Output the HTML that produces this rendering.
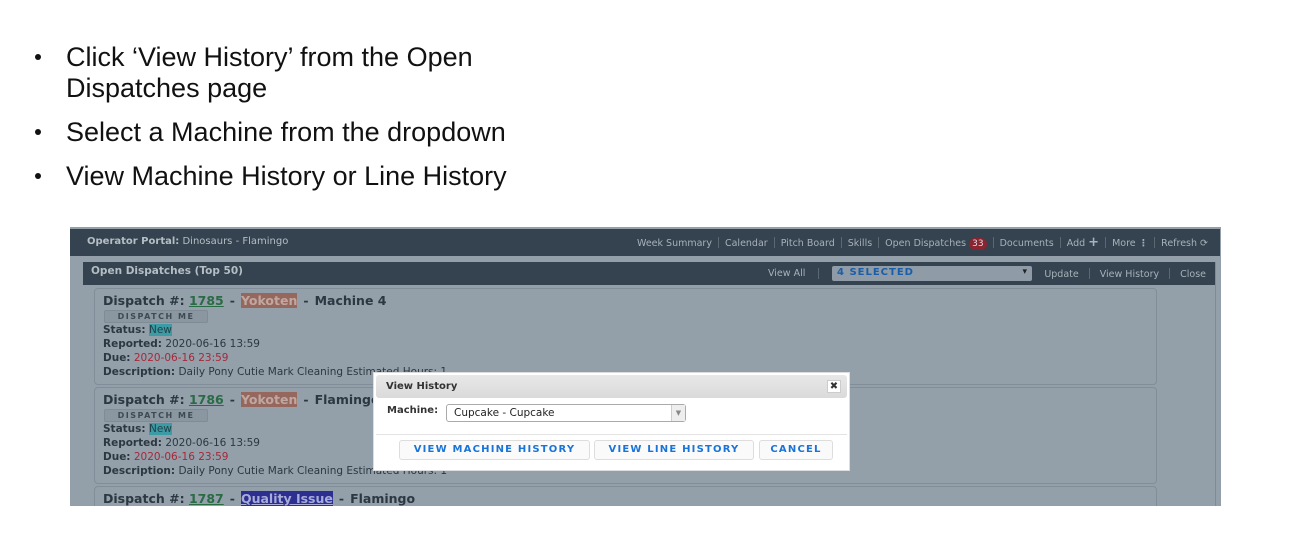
<!DOCTYPE html>
<html><head><meta charset="utf-8"><style>
*{margin:0;padding:0;box-sizing:border-box}
html,body{width:1299px;height:554px;overflow:hidden}
body{background:#fff;position:relative;font-family:"Liberation Sans",sans-serif}
.b{position:absolute;font-size:27px;color:#111;line-height:31px;white-space:nowrap}
.dot{position:absolute;width:6px;height:6px;border-radius:50%;background:#111;left:35px}
.shot{position:absolute;left:70px;top:227px;width:1151px;height:279px;background:#939fa9;overflow:hidden;font-family:"DejaVu Sans",sans-serif}
.nav{position:absolute;left:0;top:2px;width:1150px;height:27px;background:#34434f;color:#a7b2bb;font-size:9.5px}
.nav .t{position:absolute;left:17px;top:7px;color:#b6bec5;font-size:10px}
.nav .r{position:absolute;right:12px;top:8px;white-space:nowrap}
.sep{display:inline-block;width:1px;height:11px;background:#5a6874;margin:0 6px;vertical-align:-2px}
.badge{display:inline-block;background:#8a2430;color:#ddd;border-radius:8px;padding:1px 3px;font-size:9px}
.ph{position:absolute;left:13px;top:35px;width:1132px;height:23px;background:#34434f;color:#b6bec5;font-size:10.5px;font-weight:bold}
.ph .t{position:absolute;left:8px;top:3px}
.ph .r{position:absolute;right:9px;top:6px;font-weight:normal;font-size:9.5px;color:#a7b2bb;white-space:nowrap}
.sel{position:absolute;left:749px;top:4px;width:200px;height:15px;background:#8f9ba6;border-radius:2px;color:#1b5ea8;font-weight:bold;font-size:10px;padding:1px 0 0 5px;letter-spacing:1px}
.sel:after{content:"▾";position:absolute;right:4px;top:1px;color:#222;font-size:9px}
.pl{position:absolute;left:1145px;top:35px;width:1px;height:250px;background:#7f8c97}
.card{position:absolute;left:24px;width:1063px;height:97px;border:1px solid #818e99;border-radius:4px;background:#939fa9;color:#2c3841;font-size:10.5px;padding:4px 0 0 8px;line-height:14px}
.card .h{font-size:12.5px;font-weight:bold;line-height:16px;color:#2c3841}
.card .h s{text-decoration:none;margin:0 6px}
.g{color:#2a6b45;text-decoration:underline}
.yk{background:#96675d;color:#bfa8a2}
.qi{background:#2c2f8f;color:#a8acd8;text-decoration:underline}
.btn{display:inline-block;width:104px;height:13px;background:#8a96a0;border:1px solid #7f8b95;border-radius:2px;text-align:center;font-size:8px;font-weight:bold;letter-spacing:1.5px;line-height:11px;color:#3d4a54;margin:-1px 0 0 1px}
.nw{background:#3c9ca6;color:#22424a}
.rd{color:#a7283a}
.modal{position:absolute;left:373px;top:372px;width:477px;height:99px;background:#fff;border:1px solid #ddd;font-family:"DejaVu Sans",sans-serif}
.mh{position:absolute;left:2px;top:2px;width:471px;height:23px;background:linear-gradient(#e8e8e8,#dadada);border-radius:3px;font-size:10px;font-weight:bold;color:#333;padding:6px 0 0 10px}
.x{position:absolute;right:6px;top:5px;width:14px;height:13px;background:#fff;border:1px solid #ccc;font-size:10px;text-align:center;line-height:11px;color:#333}
.ml{position:absolute;left:13px;top:32px;font-size:10px;font-weight:bold;color:#333}
.dd{position:absolute;left:72px;top:31px;width:240px;height:18px;border:1px solid #aaa;border-radius:3px;font-size:10.5px;color:#222;padding:2px 0 0 7px;background:#fff}
.dd i{position:absolute;right:0;top:0;width:14px;height:16px;border-left:1px solid #ccc;background:#eee;font-size:7px;color:#888;text-align:center;line-height:16px;font-style:normal}
.hr{position:absolute;left:2px;top:61px;width:471px;height:1px;background:#e3e3e3}
.mb{position:absolute;top:67px;height:20px;border:1px solid #ddd;border-radius:3px;background:#fafafa;color:#1a74d8;font-size:10px;font-weight:bold;letter-spacing:1.2px;text-align:center;line-height:18px}
</style></head><body>
<div class="dot" style="top:54px"></div>
<div class="b" style="left:66px;top:42px">Click ‘View History’ from the Open</div>
<div class="b" style="left:66px;top:73px">Dispatches page</div>
<div class="dot" style="top:129px"></div>
<div class="b" style="left:66px;top:117px">Select a Machine from the dropdown</div>
<div class="dot" style="top:173px"></div>
<div class="b" style="left:66px;top:161px">View Machine History or Line History</div>

<div class="shot">
<div class="nav"><div class="t"><b>Operator Portal:</b> Dinosaurs - Flamingo</div>
<div class="r">Week Summary<span class="sep"></span>Calendar<span class="sep"></span>Pitch Board<span class="sep"></span>Skills<span class="sep"></span>Open Dispatches <span class="badge">33</span><span class="sep"></span>Documents<span class="sep"></span>Add <b style="font-size:13px;line-height:9px">+</b><span class="sep"></span>More <b>⋮</b><span class="sep"></span>Refresh ⟳</div></div>
<div class="ph"><div class="t">Open Dispatches (Top 50)</div>
<div style="position:absolute;left:685px;top:6px;font-weight:normal;font-size:9.5px;color:#a7b2bb">View All</div>
<div style="position:absolute;left:735px;top:6px;width:1px;height:11px;background:#5a6874"></div>
<div class="sel">4 SELECTED</div>
<div class="r">Update<span class="sep" style="margin:0 10px"></span>View History<span class="sep" style="margin:0 10px"></span>Close</div></div>
<div class="pl"></div>
<div class="card" style="top:61px"><div class="h">Dispatch #: <span class="g">1785</span><s>-</s><span class="yk">Yokoten</span><s>-</s>Machine 4</div><div class="btn">DISPATCH ME</div><div><b>Status:</b> <span class="nw">New</span></div><div><b>Reported:</b> 2020-06-16 13:59</div><div><b>Due:</b> <span class="rd">2020-06-16 23:59</span></div><div><b>Description:</b> Daily Pony Cutie Mark Cleaning Estimated Hours: 1</div></div>
<div class="card" style="top:160px"><div class="h">Dispatch #: <span class="g">1786</span><s>-</s><span class="yk">Yokoten</span><s>-</s>Flamingo</div><div class="btn">DISPATCH ME</div><div><b>Status:</b> <span class="nw">New</span></div><div><b>Reported:</b> 2020-06-16 13:59</div><div><b>Due:</b> <span class="rd">2020-06-16 23:59</span></div><div><b>Description:</b> Daily Pony Cutie Mark Cleaning Estimated Hours: 1</div></div>
<div class="card" style="top:259px;height:40px"><div class="h">Dispatch #: <span class="g">1787</span><s>-</s><span class="qi">Quality Issue</span><s>-</s>Flamingo</div></div>
</div>

<div class="modal">
<div class="mh">View History<div class="x">✖</div></div>
<div class="ml">Machine:</div>
<div class="dd">Cupcake - Cupcake<i>▼</i></div>
<div class="hr"></div>
<div class="mb" style="left:25px;width:191px">VIEW MACHINE HISTORY</div>
<div class="mb" style="left:220px;width:160px">VIEW LINE HISTORY</div>
<div class="mb" style="left:385px;width:74px">CANCEL</div>
</div>
</body></html>
